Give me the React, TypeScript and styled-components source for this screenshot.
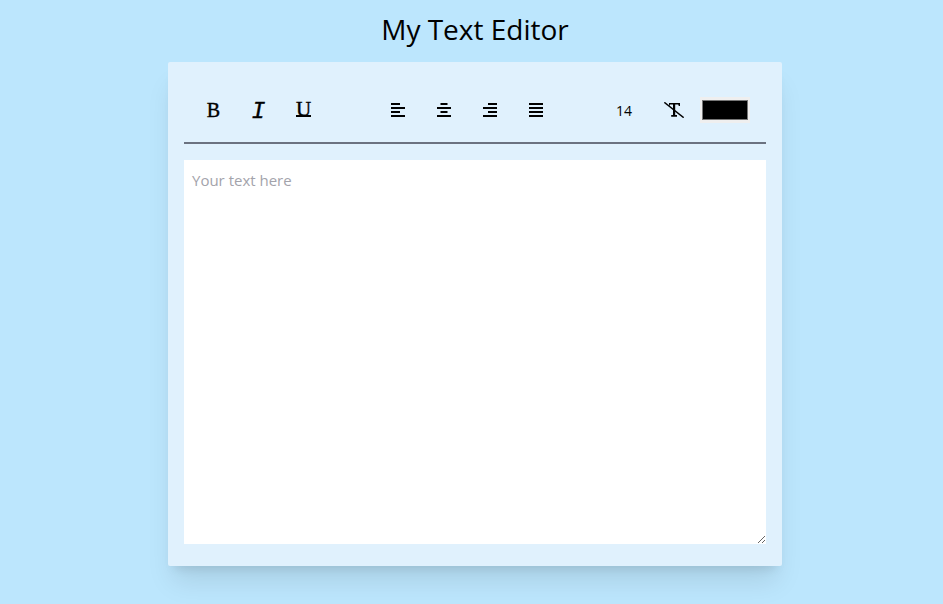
import styled, { createGlobalStyle } from "styled-components";

const GlobalStyle = createGlobalStyle`
  * {
    box-sizing: border-box;
  }
  body {
    margin: 0;
    min-height: 100vh;
    background: #bce6fd;
    font-family: "Open Sans", sans-serif;
  }
`;

const Page = styled.div`
  display: flex;
  flex-direction: column;
  align-items: center;
  padding-left: 7px;
`;

const Title = styled.h1`
  margin: 0;
  height: 62px;
  color: #000;
  font-size: 28px;
  font-weight: 400;
  line-height: 58px;
`;

const Card = styled.div`
  width: 614px;
  height: 504px;
  padding: 16px 16px 22px;
  background: #e0f1fd;
  border-radius: 2px;
  box-shadow: 0 20px 25px -5px rgba(0, 0, 0, 0.1), 0 8px 10px -6px rgba(0, 0, 0, 0.1);
`;

const Toolbar = styled.div`
  display: flex;
  align-items: center;
  justify-content: space-between;
  height: 66px;
  padding: 0 16px 0 7px;
  border-bottom: 2px solid #6b7280;
`;

const Group = styled.div`
  display: flex;
  align-items: center;
`;

const StyleGroup = styled(Group)`
  width: 138px;

  button {
    width: 45px;
  }
`;

const ToolButton = styled.button`
  display: flex;
  align-items: center;
  justify-content: center;
  width: 46px;
  height: 32px;
  padding: 0;
  border: none;
  background: transparent;
  color: #000;
`;

const Glyph = styled.span<{ $italic?: boolean; $underline?: boolean }>`
  display: block;
  padding-top: ${(p) => (p.$italic ? "3px" : "0")};
  color: #000;
  font-family: ${(p) => (p.$italic ? '"Liberation Mono", monospace' : '"Liberation Serif", serif')};
  font-size: ${(p) => (p.$italic ? "23px" : p.$underline ? "21px" : "20px")};
  font-weight: 400;
  -webkit-text-stroke: 0.4px #000;
  font-style: ${(p) => (p.$italic ? "italic" : "normal")};
  line-height: ${(p) => (p.$underline ? "12px" : "20px")};
  border-bottom: ${(p) => (p.$underline ? "2px solid #000" : "none")};
`;

const FontSize = styled.span`
  width: 46px;
  padding-right: 8px;
  text-align: center;
  font-size: 14px;
`;

const ColorInput = styled.input`
  width: 50px;
  height: 26px;
  margin-left: 3px;
  border: none;
  padding: 0;
  background: #efefef;

  &::-webkit-color-swatch-wrapper {
    padding: 3px 2px;
  }
`;

const Editor = styled.textarea`
  display: block;
  width: 100%;
  height: 384px;
  margin-top: 16px;
  padding: 10px 8px;
  border: none;
  outline: none;
  background: #fff;
  font-family: "Open Sans", sans-serif;
  font-size: 15px;

  &::placeholder {
    color: #a3a3ab;
  }
`;

// line widths and offsets of the four bars of an align icon
const alignBars: Record<string, [number, number][]> = {
  left: [[0, 9], [0, 14], [0, 9], [0, 14]],
  center: [[3.5, 7], [0, 14], [3.5, 7], [0, 14]],
  right: [[5, 9], [0, 14], [5, 9], [0, 14]],
  justify: [[0, 14], [0, 14], [0, 14], [0, 14]],
};

const AlignIcon = ({ kind }: { kind: string }) => (
  <svg width="14" height="14" viewBox="0 0 14 14">
    {alignBars[kind].map(([x, w], i) => (
      <rect key={i} x={x} y={i * 4} width={w} height="2" fill="#000" />
    ))}
  </svg>
);

const ClearIcon = () => (
  <svg width="20" height="16" viewBox="0 0 20 16">
    <path d="M5 1h11v3h-1.2l-.6-1.4h-3V13h1.8v1.8H7.2V13H9V2.6H6l-.6 1.4H5z" fill="#000" />
    <path d="M0.3 0.3 19.7 15.7" stroke="#000" strokeWidth="1.4" fill="none" />
  </svg>
);

export default function App() {
  return (
    <Page>
      <GlobalStyle />
      <Title>My Text Editor</Title>
      <Card>
        <Toolbar>
          <StyleGroup>
            <ToolButton><Glyph>B</Glyph></ToolButton>
            <ToolButton><Glyph $italic>I</Glyph></ToolButton>
            <ToolButton><Glyph $underline>U</Glyph></ToolButton>
          </StyleGroup>
          <Group>
            <ToolButton><AlignIcon kind="left" /></ToolButton>
            <ToolButton><AlignIcon kind="center" /></ToolButton>
            <ToolButton><AlignIcon kind="right" /></ToolButton>
            <ToolButton><AlignIcon kind="justify" /></ToolButton>
          </Group>
          <Group>
            <FontSize>14</FontSize>
            <ToolButton><ClearIcon /></ToolButton>
            <ColorInput type="color" defaultValue="#000000" />
          </Group>
        </Toolbar>
        <Editor placeholder="Your text here" />
      </Card>
    </Page>
  );
}
